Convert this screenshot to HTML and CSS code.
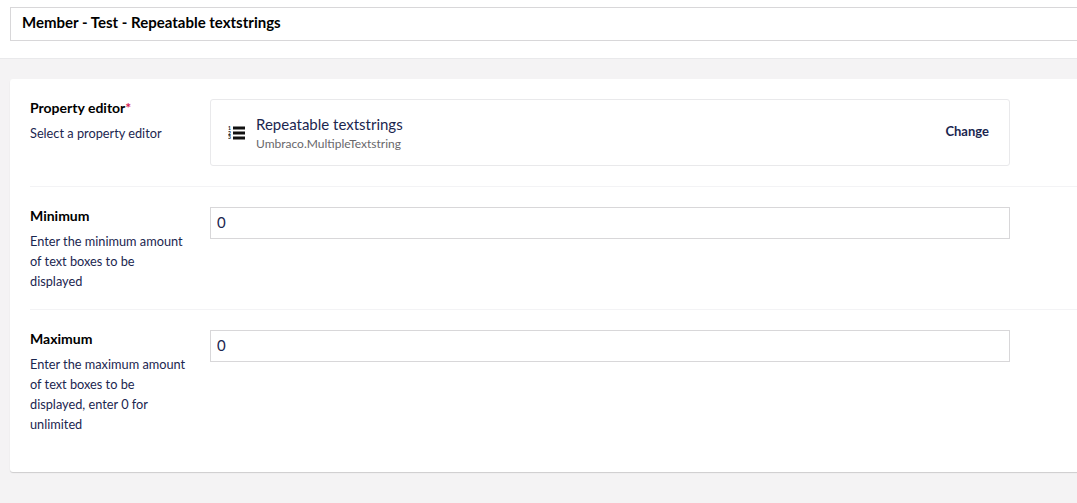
FILE: index.html
```html
<!DOCTYPE html>
<html lang="en">
<head>
    <meta charset="UTF-8">
    <title>Member - Test - Repeatable textstrings</title>
    <link rel="stylesheet" href="styles.css">
</head>
<body>
    <div class="page">
        <header class="header">
            <div class="name-box">Member - Test - Repeatable textstrings</div>
        </header>

        <main class="content">
            <section class="card">
                <div class="row row-first">
                    <div class="label-col">
                        <div class="label">Property editor<span class="req">*</span></div>
                        <div class="desc">Select a property editor</div>
                    </div>
                    <div class="editor-picker">
                        <svg class="list-icon" width="17" height="14" viewBox="0 0 17 14" aria-hidden="true">
                            <text class="list-num" x="0" y="4">1</text>
                            <text class="list-num" x="0" y="8.5">2</text>
                            <text class="list-num" x="0" y="13">3</text>
                            <rect x="5" y="0.5" width="12" height="3" fill="#111"/>
                            <rect x="5" y="5.5" width="12" height="3" fill="#111"/>
                            <rect x="5" y="10.5" width="12" height="3" fill="#111"/>
                        </svg>
                        <div class="editor-info">
                            <div class="editor-name">Repeatable textstrings</div>
                            <div class="editor-alias">Umbraco.MultipleTextstring</div>
                        </div>
                        <a class="change" href="#">Change</a>
                    </div>
                </div>

                <div class="row">
                    <div class="label-col">
                        <div class="label">Minimum</div>
                        <div class="desc">Enter the minimum amount of text boxes to be displayed</div>
                    </div>
                    <input class="num-input" type="text" value="0">
                </div>

                <div class="row row-last">
                    <div class="label-col">
                        <div class="label">Maximum</div>
                        <div class="desc">Enter the maximum amount of text boxes to be displayed, enter 0 for unlimited</div>
                    </div>
                    <input class="num-input" type="text" value="0">
                </div>
            </section>
        </main>
    </div>
</body>
</html>
```

FILE: styles.css
```css
* {
    margin: 0;
    padding: 0;
    box-sizing: border-box;
}

html, body {
    height: 100%;
    overflow: hidden;
}

body {
    font-family: 'Lato', sans-serif;
    font-size: 14px;
    color: #1b264f;
    background: #f4f3f4;
}

.page {
    width: 1100px;
}

/* Header */
.header {
    height: 59px;
    padding: 7px 0 0 10px;
    background: #fff;
    border-bottom: 1px solid #e9e9eb;
}

.name-box {
    height: 34px;
    padding: 0 11px;
    border: 1px solid #d8d7d9;
    font-size: 15px;
    font-weight: 700;
    line-height: 28px;
    color: #000;
}

/* Card */
.content {
    padding: 20px 0 0 10px;
}

.card {
    height: 393px;
    padding: 20px 0 0 20px;
    background: #fff;
    border-radius: 3px;
    box-shadow: 0 1px 1px rgba(0, 0, 0, 0.16);
}

.row {
    display: flex;
    padding: 20px 0 18px;
    border-bottom: 1px solid #f3f3f5;
}

.row-first {
    padding: 0 0 20px;
}

.row-last {
    border-bottom: none;
}

.label-col {
    flex: 0 0 180px;
    padding-right: 20px;
}

.label {
    font-size: 14px;
    font-weight: 700;
    line-height: 18px;
    color: #000;
}

.req {
    color: #d42054;
}

.desc {
    margin-top: 6px;
    font-size: 12.75px;
    line-height: 20px;
    color: #1b264f;
}

/* Property editor picker */
.editor-picker {
    display: flex;
    align-items: center;
    width: 800px;
    height: 67px;
    padding: 0 20px 0 17px;
    border: 1px solid #e9e9eb;
    border-radius: 3px;
}

.list-icon {
    flex: none;
    margin: 1px 11px 0 0;
}

.list-num {
    font-size: 5px;
    font-weight: 700;
    fill: #111;
}

.editor-info {
    flex: 1;
}

.editor-name {
    font-size: 15px;
    line-height: 20px;
    margin-top: 2px;
    color: #1b264f;
}

.editor-alias {
    font-size: 12px;
    line-height: 20px;
    color: #68676b;
}

.change {
    margin-top: -4px;
    font-size: 13px;
    font-weight: 700;
    color: #1b264f;
    text-decoration: none;
}

.num-input {
    width: 800px;
    height: 32px;
    padding: 0 6px 2px;
    border: 1px solid #d8d7d9;
    font-family: 'Lato', sans-serif;
    font-size: 15px;
    color: #1b264f;
    outline: none;
}
```
